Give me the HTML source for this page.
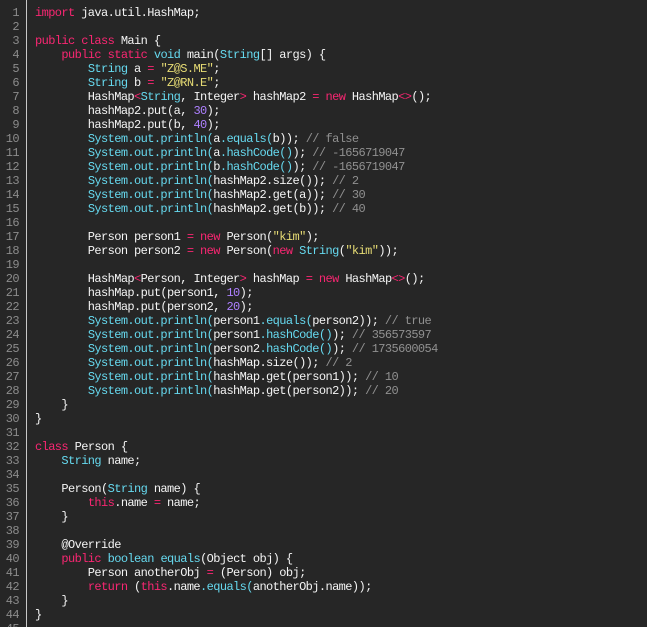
<!DOCTYPE html>
<html><head><meta charset="utf-8"><style>
html,body{margin:0;padding:0;background:#262626;width:647px;height:627px;overflow:hidden}
.wrap{position:relative;width:647px;height:627px}
.sep{position:absolute;left:26px;top:0;width:1px;height:627px;background:#c8c8c8}
.g{position:absolute;left:0;top:6px;width:19px;text-align:right;color:#8c8c8c;font:12px/14px "Liberation Mono",monospace;letter-spacing:-0.6px;white-space:pre}
.c{position:absolute;left:35px;top:6px;color:#f4f4f4;font:12px/14px "Liberation Mono",monospace;letter-spacing:-0.6px;white-space:pre}
.k{color:#f92672}.t{color:#66d9ef}.s{color:#e6db74}.n{color:#ae81ff}.m{color:#909090}
</style></head><body><div class="wrap">
<div class="sep"></div>
<div class="g">1
2
3
4
5
6
7
8
9
10
11
12
13
14
15
16
17
18
19
20
21
22
23
24
25
26
27
28
29
30
31
32
33
34
35
36
37
38
39
40
41
42
43
44
45</div>
<div class="c"><span class="k">import</span> java.util.HashMap;

<span class="k">public class</span> Main {
    <span class="k">public static</span> <span class="t">void</span> main(<span class="t">String</span>[] args) {
        <span class="t">String</span> a <span class="k">=</span> <span class="s">"Z@S.ME"</span>;
        <span class="t">String</span> b <span class="k">=</span> <span class="s">"Z@RN.E"</span>;
        HashMap<span class="k">&lt;</span><span class="t">String</span>, Integer<span class="k">&gt;</span> hashMap2 <span class="k">=</span> <span class="k">new</span> HashMap<span class="k">&lt;&gt;</span>();
        hashMap2.put(a, <span class="n">30</span>);
        hashMap2.put(b, <span class="n">40</span>);
        <span class="t">System.out.println(</span>a<span class="t">.equals(</span>b)); <span class="m">// false</span>
        <span class="t">System.out.println(</span>a<span class="t">.hashCode()</span>); <span class="m">// -1656719047</span>
        <span class="t">System.out.println(</span>b<span class="t">.hashCode()</span>); <span class="m">// -1656719047</span>
        <span class="t">System.out.println(</span>hashMap2.size()); <span class="m">// 2</span>
        <span class="t">System.out.println(</span>hashMap2.get(a)); <span class="m">// 30</span>
        <span class="t">System.out.println(</span>hashMap2.get(b)); <span class="m">// 40</span>

        Person person1 <span class="k">=</span> <span class="k">new</span> Person(<span class="s">"kim"</span>);
        Person person2 <span class="k">=</span> <span class="k">new</span> Person(<span class="k">new</span> <span class="t">String</span>(<span class="s">"kim"</span>));

        HashMap<span class="k">&lt;</span>Person, Integer<span class="k">&gt;</span> hashMap <span class="k">=</span> <span class="k">new</span> HashMap<span class="k">&lt;&gt;</span>();
        hashMap.put(person1, <span class="n">10</span>);
        hashMap.put(person2, <span class="n">20</span>);
        <span class="t">System.out.println(</span>person1<span class="t">.equals(</span>person2)); <span class="m">// true</span>
        <span class="t">System.out.println(</span>person1<span class="t">.hashCode()</span>); <span class="m">// 356573597</span>
        <span class="t">System.out.println(</span>person2<span class="t">.hashCode()</span>); <span class="m">// 1735600054</span>
        <span class="t">System.out.println(</span>hashMap.size()); <span class="m">// 2</span>
        <span class="t">System.out.println(</span>hashMap.get(person1)); <span class="m">// 10</span>
        <span class="t">System.out.println(</span>hashMap.get(person2)); <span class="m">// 20</span>
    }
}

<span class="k">class</span> Person {
    <span class="t">String</span> name;

    Person(<span class="t">String</span> name) {
        <span class="k">this</span>.name <span class="k">=</span> name;
    }

    @Override
    <span class="k">public</span> <span class="t">boolean</span> <span class="t">equals</span>(Object obj) {
        Person anotherObj <span class="k">=</span> (Person) obj;
        <span class="k">return</span> (<span class="k">this</span>.name<span class="t">.equals(</span>anotherObj.name));
    }
}</div>
</div></body></html>
